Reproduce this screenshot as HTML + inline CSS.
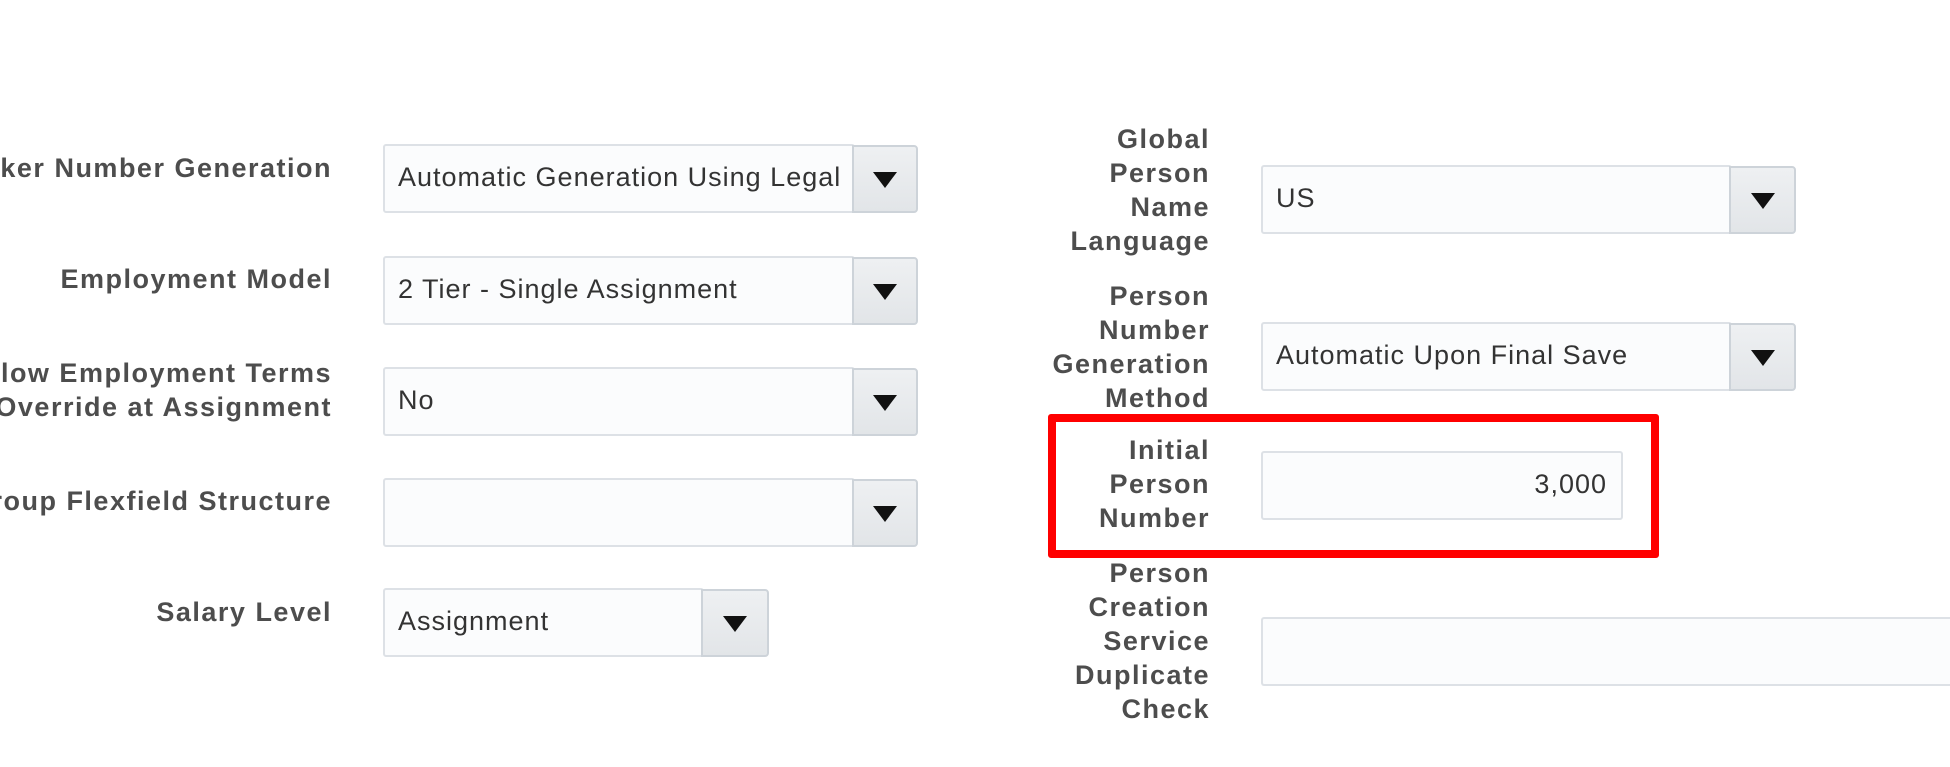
<!DOCTYPE html>
<html><head><meta charset="utf-8"><style>
html,body{margin:0;width:1950px;height:767px;overflow:hidden}
body{background:#fff;position:relative;font-family:"Liberation Sans",Arial,sans-serif}
.l{position:absolute;text-align:right;font-weight:bold;color:#4d4d4d;font-size:27px;line-height:34px;white-space:nowrap;letter-spacing:1.5px}
.in{position:absolute;box-sizing:border-box;background:#fbfcfd;border:2px solid #dde1e6;border-radius:3px;font-size:27px;color:#333;padding-left:13px;line-height:62px;white-space:nowrap;overflow:hidden;letter-spacing:1px}
.bt{position:absolute;box-sizing:border-box;background:linear-gradient(#eef0f2,#e2e5e8);border:2px solid #cdd3d9;border-radius:0 4px 4px 0}
.bt:after{content:"";position:absolute;left:50%;top:50%;margin:-7px 0 0 -12px;border-left:12px solid transparent;border-right:12px solid transparent;border-top:16px solid #111}
</style></head><body>
<div class="l" style="right:1618px;top:151px">Worker Number Generation</div>
<div class="in" style="left:383px;top:144px;width:472px;height:69px">Automatic Generation Using Legal</div><div class="bt" style="left:852px;top:145px;width:66px;height:68px"></div>

<div class="l" style="right:1618px;top:262px">Employment Model</div>
<div class="in" style="left:383px;top:256px;width:472px;height:69px">2 Tier - Single Assignment</div><div class="bt" style="left:852px;top:257px;width:66px;height:68px"></div>

<div class="l" style="right:1618px;top:356px">Allow Employment Terms<br>Override at Assignment</div>
<div class="in" style="left:383px;top:367px;width:472px;height:69px">No</div><div class="bt" style="left:852px;top:368px;width:66px;height:68px"></div>

<div class="l" style="right:1618px;top:484px">People Group Flexfield Structure</div>
<div class="in" style="left:383px;top:478px;width:472px;height:69px"></div><div class="bt" style="left:852px;top:479px;width:66px;height:68px"></div>

<div class="l" style="right:1618px;top:595px">Salary Level</div>
<div class="in" style="left:383px;top:588px;width:321px;height:69px">Assignment</div><div class="bt" style="left:701px;top:589px;width:68px;height:68px"></div>

<div class="l" style="right:740px;top:122px">Global<br>Person<br>Name<br>Language</div>
<div class="in" style="left:1261px;top:165px;width:471px;height:69px">US</div><div class="bt" style="left:1729px;top:166px;width:67px;height:68px"></div>

<div class="l" style="right:740px;top:279px">Person<br>Number<br>Generation<br>Method</div>
<div class="in" style="left:1261px;top:322px;width:471px;height:69px">Automatic Upon Final Save</div><div class="bt" style="left:1729px;top:323px;width:67px;height:68px"></div>

<div style="position:absolute;left:1048px;top:414px;width:611px;height:144px;box-sizing:border-box;border:8px solid #f00;border-radius:3px"></div>
<div class="l" style="right:740px;top:433px">Initial<br>Person<br>Number</div>
<div class="in" style="left:1261px;top:451px;width:362px;height:69px;text-align:right;padding-right:14px">3,000</div>

<div class="l" style="right:740px;top:556px">Person<br>Creation<br>Service<br>Duplicate<br>Check</div>
<div class="in" style="left:1261px;top:617px;width:689px;height:69px;border-right:none;border-radius:3px 0 0 3px"></div>
</body></html>
